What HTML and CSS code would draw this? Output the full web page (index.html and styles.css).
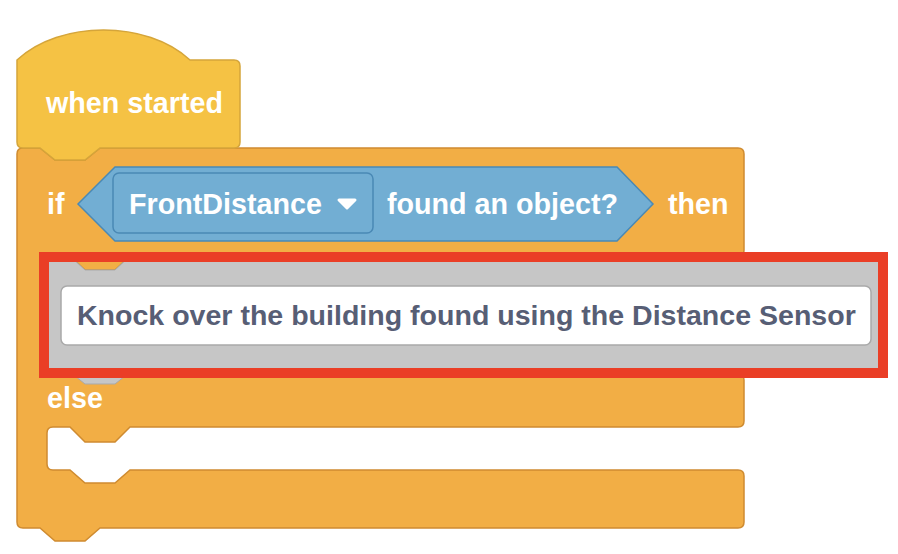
FILE: index.html
```html
<!DOCTYPE html>
<html lang="en">
<head>
    <meta charset="UTF-8">
    <title>If / else block</title>
    <link rel="stylesheet" href="styles.css">
</head>
<body>

    <svg class="workspace" width="898" height="554" viewBox="0 0 898 554">
        <!-- if / else C block -->
        <path class="block-control" d="M17,154 Q17,148 23,148 H40 L55,160 H85 L100,148 H738 Q744,148 744,154
            V250 Q744,256 738,256 H130 L115,270 H85 L70,256 H53 Q47,256 47,262
            V368 Q47,374 53,374 H738 Q744,374 744,380
            V421 Q744,427 738,427 H130 L115,442 H85 L70,427 H53 Q47,427 47,433
            V464 Q47,470 53,470 H70 L85,483 H115 L130,470 H738 Q744,470 744,476
            V522 Q744,528 738,528 H100 L85,541 H55 L40,528 H23 Q17,528 17,522 Z"/>

        <!-- hat block -->
        <path class="block-event" d="M17,60 C60,20 147,20 190,60 H234 Q240,60 240,66 V142 Q240,148 234,148
            H100 L85,160 H55 L40,148 H23 Q17,148 17,142 Z"/>
        <text class="label" x="46" y="113">when started</text>

        <!-- condition -->
        <text class="label" x="47" y="214">if</text>
        <path class="block-sensing" d="M78,204 L115,167 H617 L653,204 L617,241 H115 Z"/>
        <rect class="block-sensing" x="113" y="173" width="260" height="60" rx="6"/>
        <text class="label" x="129" y="214">FrontDistance</text>
        <path class="dropdown-arrow" d="M339,200 H355 L347,208 Z"/>
        <text class="label" x="387" y="214">found an object?</text>
        <text class="label" x="668" y="214">then</text>

        <!-- comment block inside the first mouth -->
        <path class="block-comment" d="M53,256 H70 L85,270 H115 L130,256 H880 V372
            H130 L115,384 H85 L70,372 H53 Q47,372 47,366 V262 Q47,256 53,256 Z"/>
        <rect class="text-field" x="61" y="286" width="810" height="59" rx="6"/>
        <text class="comment-text" x="77" y="325">Knock over the building found using the Distance Sensor</text>
        <rect class="highlight" x="44" y="257" width="839" height="116"/>

        <text class="label" x="47" y="408">else</text>
    </svg>

</body>
</html>
```

FILE: styles.css
```css
body {
    margin: 0;
    background-color: #fff;
}
.workspace {
    display: block;
}
.block-event {
    fill: #f5c244;
    stroke: #d5a53a;
    stroke-width: 1.5;
}
.block-control {
    fill: #f2ae45;
    stroke: #cf8b30;
    stroke-width: 1.5;
}
.block-sensing {
    fill: #72aed3;
    stroke: #4a89b5;
    stroke-width: 1.5;
}
.block-comment {
    fill: #c6c6c6;
    stroke: #a9a9a9;
    stroke-width: 1;
}
.text-field {
    fill: #fff;
    stroke: #a9a9a9;
    stroke-width: 1.5;
}
.dropdown-arrow {
    fill: #fff;
    stroke: #fff;
    stroke-width: 3;
    stroke-linejoin: round;
}
.highlight {
    fill: none;
    stroke: #ea3e26;
    stroke-width: 10;
}
.label {
    font-family: "Liberation Sans", Arial, sans-serif;
    font-weight: bold;
    font-size: 28.7px;
    fill: #fff;
}
.comment-text {
    font-family: "Liberation Sans", Arial, sans-serif;
    font-weight: bold;
    font-size: 28.55px;
    fill: #575e75;
}
```
